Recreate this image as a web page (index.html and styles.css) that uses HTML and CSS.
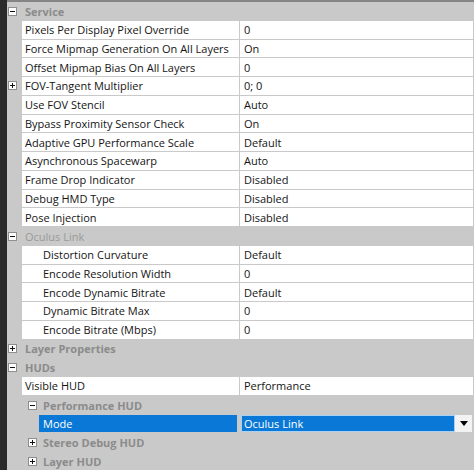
FILE: index.html
```html
<!DOCTYPE html>
<html>
<head>
<meta charset="utf-8">
<link rel="stylesheet" href="styles.css">
</head>
<body>
<div class="panel">
  <div class="row cat"><span class="tog minus"></span><span class="label">Service</span></div>
  <div class="row prop"><span class="gutter"></span><span class="name">Pixels Per Display Pixel Override</span><span class="value">0</span></div>
  <div class="row prop"><span class="gutter"></span><span class="name">Force Mipmap Generation On All Layers</span><span class="value">On</span></div>
  <div class="row prop"><span class="gutter"></span><span class="name">Offset Mipmap Bias On All Layers</span><span class="value">0</span></div>
  <div class="row prop"><span class="gutter"><span class="tog plus"></span></span><span class="name">FOV-Tangent Multiplier</span><span class="value">0; 0</span></div>
  <div class="row prop"><span class="gutter"></span><span class="name">Use FOV Stencil</span><span class="value">Auto</span></div>
  <div class="row prop"><span class="gutter"></span><span class="name">Bypass Proximity Sensor Check</span><span class="value">On</span></div>
  <div class="row prop"><span class="gutter"></span><span class="name">Adaptive GPU Performance Scale</span><span class="value">Default</span></div>
  <div class="row prop"><span class="gutter"></span><span class="name">Asynchronous Spacewarp</span><span class="value">Auto</span></div>
  <div class="row prop"><span class="gutter"></span><span class="name">Frame Drop Indicator</span><span class="value">Disabled</span></div>
  <div class="row prop"><span class="gutter"></span><span class="name">Debug HMD Type</span><span class="value">Disabled</span></div>
  <div class="row prop"><span class="gutter"></span><span class="name">Pose Injection</span><span class="value">Disabled</span></div>
  <div class="row cat"><span class="tog minus"></span><span class="label light">Oculus Link</span></div>
  <div class="row prop"><span class="gutter"></span><span class="name indent">Distortion Curvature</span><span class="value">Default</span></div>
  <div class="row prop"><span class="gutter"></span><span class="name indent">Encode Resolution Width</span><span class="value">0</span></div>
  <div class="row prop"><span class="gutter"></span><span class="name indent">Encode Dynamic Bitrate</span><span class="value">Default</span></div>
  <div class="row prop"><span class="gutter"></span><span class="name indent">Dynamic Bitrate Max</span><span class="value">0</span></div>
  <div class="row prop"><span class="gutter"></span><span class="name indent">Encode Bitrate (Mbps)</span><span class="value">0</span></div>
  <div class="row cat"><span class="tog plus"></span><span class="label">Layer Properties</span></div>
  <div class="row cat"><span class="tog minus"></span><span class="label">HUDs</span></div>
  <div class="row prop"><span class="gutter"></span><span class="name">Visible HUD</span><span class="value">Performance</span></div>
  <div class="row cat sub"><span class="tog minus"></span><span class="label">Performance HUD</span></div>
  <div class="row prop selected">
    <span class="gutter wide"></span>
    <span class="name sel">Mode</span>
    <span class="editor"><span class="edit-text">Oculus Link</span><span class="drop"><svg width="8" height="5" viewBox="0 0 8 5"><path d="M0 0H8L4 5Z" fill="#000"/></svg></span></span>
  </div>
  <div class="row cat sub"><span class="tog plus"></span><span class="label">Stereo Debug HUD</span></div>
  <div class="row cat sub"><span class="tog plus"></span><span class="label">Layer HUD</span></div>
</div>
</body>
</html>
```
FILE: styles.css
```css
html, body {
  margin: 0;
  padding: 0;
}
body {
  width: 474px;
  height: 470px;
  overflow: hidden;
  background: #2a2a2a;
  font-family: "Open Sans", "Noto Sans", sans-serif;
  font-size: 11px;
  color: #141414;
}
.panel {
  margin-left: 7px;
  height: 470px;
  box-sizing: border-box;
  border-top: 2px solid #858585;
  background: #c9c9c9;
  overflow: hidden;
}
.row {
  display: flex;
  align-items: stretch;
  height: 18.75px;
  box-sizing: border-box;
}
.prop {
  padding-bottom: 1px;
}
.gutter {
  width: 15px;
  flex: none;
  display: flex;
  align-items: center;
}
.gutter.wide {
  width: 32px;
}
.name {
  width: 217px;
  flex: none;
  box-sizing: border-box;
  background: #fff;
  padding-left: 3px;
  display: flex;
  align-items: center;
  white-space: nowrap;
  overflow: hidden;
}
.name.indent {
  padding-left: 21px;
}
.value {
  flex: 1;
  margin-left: 1px;
  margin-right: 1px;
  background: #fff;
  padding-left: 4px;
  display: flex;
  align-items: center;
  white-space: nowrap;
}
.cat {
  align-items: center;
}
.tog {
  width: 9px;
  height: 9px;
  box-sizing: border-box;
  border: 1px solid #8e8e8e;
  background: #fff;
  margin-left: 1px;
  flex: none;
  position: relative;
}
.tog::before {
  content: "";
  position: absolute;
  left: 1px;
  top: 3px;
  width: 5px;
  height: 1px;
  background: #111;
}
.tog.plus::after {
  content: "";
  position: absolute;
  left: 3px;
  top: 1px;
  width: 1px;
  height: 5px;
  background: #111;
}
.cat .label {
  margin-left: 8px;
  font-weight: bold;
  color: #8b8b8b;
  white-space: nowrap;
}
.cat .label.light {
  font-weight: normal;
  color: #999;
}
.cat.sub .tog {
  margin-left: 21px;
}
.cat.sub .label {
  margin-left: 6px;
}
.name.sel {
  width: 198px;
  background: #0a78d6;
  color: #fff;
  padding-left: 4px;
}
.editor {
  flex: 1;
  margin-left: 4px;
  margin-right: 2px;
  display: flex;
}
.edit-text {
  flex: 1;
  background: #0a78d6;
  color: #fff;
  border: 1px solid #a9d1f3;
  padding-left: 2px;
  display: flex;
  align-items: center;
}
.drop {
  width: 17px;
  flex: none;
  background: #f2f2f2;
  display: flex;
  align-items: center;
  justify-content: center;
}
```
